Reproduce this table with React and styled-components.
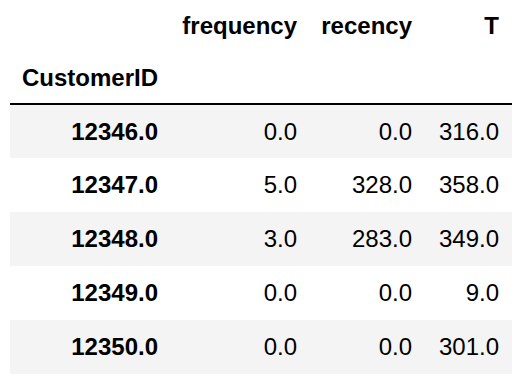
import styled, { createGlobalStyle } from "styled-components";

const GlobalStyle = createGlobalStyle`
  body {
    margin: 0;
    background: #fff;
    font-family: "Liberation Sans", Arial, Helvetica, sans-serif;
    color: #000;
  }
`;

const Frame = styled.div`
  padding: 0 0 0 10px;
`;

const Table = styled.table`
  border-collapse: collapse;
  border-spacing: 0;
  table-layout: fixed;
  width: 502px;
  font-size: 24px;
  line-height: 27.6px;
`;

const Col = styled.col`
  width: ${(p) => p.w}px;
`;

const HeadRow = styled.tr`
  height: 52px;

  &.last {
    border-bottom: 2px solid #000;
  }
`;

const Th = styled.th`
  padding: 0 13px 0 0;
  text-align: right;
  vertical-align: middle;
  font-weight: bold;
  white-space: nowrap;
`;

const Row = styled.tr`
  height: 54px;
  background: ${(p) => (p.odd ? "#f4f4f4" : "#fff")};
`;

const Td = styled.td`
  padding: 0 13px 0 0;
  text-align: right;
  vertical-align: middle;
  white-space: nowrap;
`;

const IndexCell = styled.th`
  padding: 0 13px 0 0;
  text-align: right;
  vertical-align: middle;
  font-weight: bold;
  white-space: nowrap;
`;

const columns = ["frequency", "recency", "T"];

const rows = [
  { id: "12346.0", frequency: "0.0", recency: "0.0", T: "316.0" },
  { id: "12347.0", frequency: "5.0", recency: "328.0", T: "358.0" },
  { id: "12348.0", frequency: "3.0", recency: "283.0", T: "349.0" },
  { id: "12349.0", frequency: "0.0", recency: "0.0", T: "9.0" },
  { id: "12350.0", frequency: "0.0", recency: "0.0", T: "301.0" },
];

const App = () => {
  return (
    <Frame>
      <GlobalStyle />
      <Table>
        <colgroup>
          <Col w={161} />
          <Col w={139} />
          <Col w={115} />
          <Col w={87} />
        </colgroup>
        <thead>
          <HeadRow>
            <Th />
            {columns.map((c) => (
              <Th key={c}>{c}</Th>
            ))}
          </HeadRow>
          <HeadRow className="last">
            <Th>CustomerID</Th>
            <Th />
            <Th />
            <Th />
          </HeadRow>
        </thead>
        <tbody>
          {rows.map((r, i) => (
            <Row key={r.id} odd={i % 2 === 0}>
              <IndexCell>{r.id}</IndexCell>
              {columns.map((c) => (
                <Td key={c}>{r[c]}</Td>
              ))}
            </Row>
          ))}
        </tbody>
      </Table>
    </Frame>
  );
};

export default App;
